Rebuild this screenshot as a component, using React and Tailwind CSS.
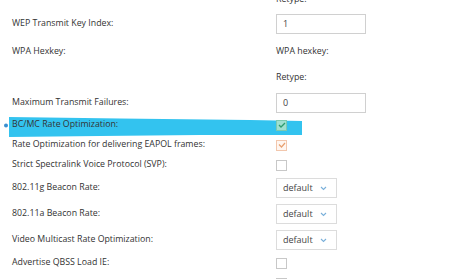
import React from "react";

const font = { fontFamily: '"Open Sans", "Noto Sans", sans-serif' };

function TextInput({ value }) {
  return (
    <div className="flex h-[20px] w-[90px] items-center border border-[#d0d0d0] bg-white pl-[6px] text-[9px] text-[#444]">
      {value}
    </div>
  );
}

function Select() {
  return (
    <div className="flex h-[20px] w-[61px] items-center justify-between border border-[#dcdcdc] bg-white pl-[6px] pr-[9px] text-[9px] text-[#444]">
      <span>default</span>
      <svg width="7" height="5" viewBox="0 0 7 5">
        <path d="M1 1 L3.5 3.5 L6 1" fill="none" stroke="#7ab0da" strokeWidth="1.1" />
      </svg>
    </div>
  );
}

function Checkbox({ variant }) {
  if (variant === "green") {
    return (
      <div className="flex h-[11px] w-[11px] items-center justify-center border border-[#7cc9b0] bg-[#9fe0d0]">
        <svg width="8" height="6" viewBox="0 0 8 6">
          <path d="M1 3 L3 5 L7 1" fill="none" stroke="#2e9c6e" strokeWidth="1.3" />
        </svg>
      </div>
    );
  }
  if (variant === "orange") {
    return (
      <div className="flex h-[11px] w-[11px] items-center justify-center border border-[#f2c7ad] bg-[#fff6f0]">
        <svg width="8" height="6" viewBox="0 0 8 6">
          <path d="M1 2.5 L3.5 5 L7 1" fill="none" stroke="#e8a070" strokeWidth="1.2" />
        </svg>
      </div>
    );
  }
  return <div className="h-[11px] w-[11px] border border-[#c8c8c8] bg-white" />;
}

function Row({ h, label, children }) {
  return (
    <div className={`grid grid-cols-[264px_1fr] items-center ${h}`}>
      <div className="text-[8.8px] text-[#333]">{label}</div>
      <div className="flex items-center text-[8.8px] text-[#333]">{children}</div>
    </div>
  );
}

export default function App() {
  return (
    <div className="relative h-[279px] w-[474px] overflow-hidden bg-white" style={font}>
      <svg className="absolute left-0 top-0" width="474" height="279" viewBox="0 0 474 279">
        <polygon points="9,117 120,118.5 250,120 302,121 302,135 200,135 100,136 9,137" fill="#33c3ef" />
        <circle cx="6" cy="125.5" r="2" fill="#3a8fd0" />
      </svg>
      <div className="relative mt-[-10px] pl-[12px]">
        <Row h="h-[20px]" label="">Retype:</Row>
        <Row h="h-[28px]" label="WEP Transmit Key Index:">
          <TextInput value="1" />
        </Row>
        <Row h="h-[28px]" label="WPA Hexkey:">WPA hexkey:</Row>
        <Row h="h-[24px]" label="">Retype:</Row>
        <Row h="h-[25px]" label="Maximum Transmit Failures:">
          <TextInput value="0" />
        </Row>
        <Row h="h-[20px]" label="BC/MC Rate Optimization:">
          <Checkbox variant="green" />
        </Row>
        <Row h="h-[20px]" label="Rate Optimization for delivering EAPOL frames:">
          <Checkbox variant="orange" />
        </Row>
        <Row h="h-[20px]" label="Strict Spectralink Voice Protocol (SVP):">
          <Checkbox />
        </Row>
        <Row h="h-[26px]" label="802.11g Beacon Rate:">
          <Select />
        </Row>
        <Row h="h-[26px]" label="802.11a Beacon Rate:">
          <Select />
        </Row>
        <Row h="h-[26px]" label="Video Multicast Rate Optimization:">
          <Select />
        </Row>
        <Row h="h-[20px]" label="Advertise QBSS Load IE:">
          <Checkbox />
        </Row>
        <Row h="h-[20px]" label="">
          <Checkbox />
        </Row>
      </div>
    </div>
  );
}
